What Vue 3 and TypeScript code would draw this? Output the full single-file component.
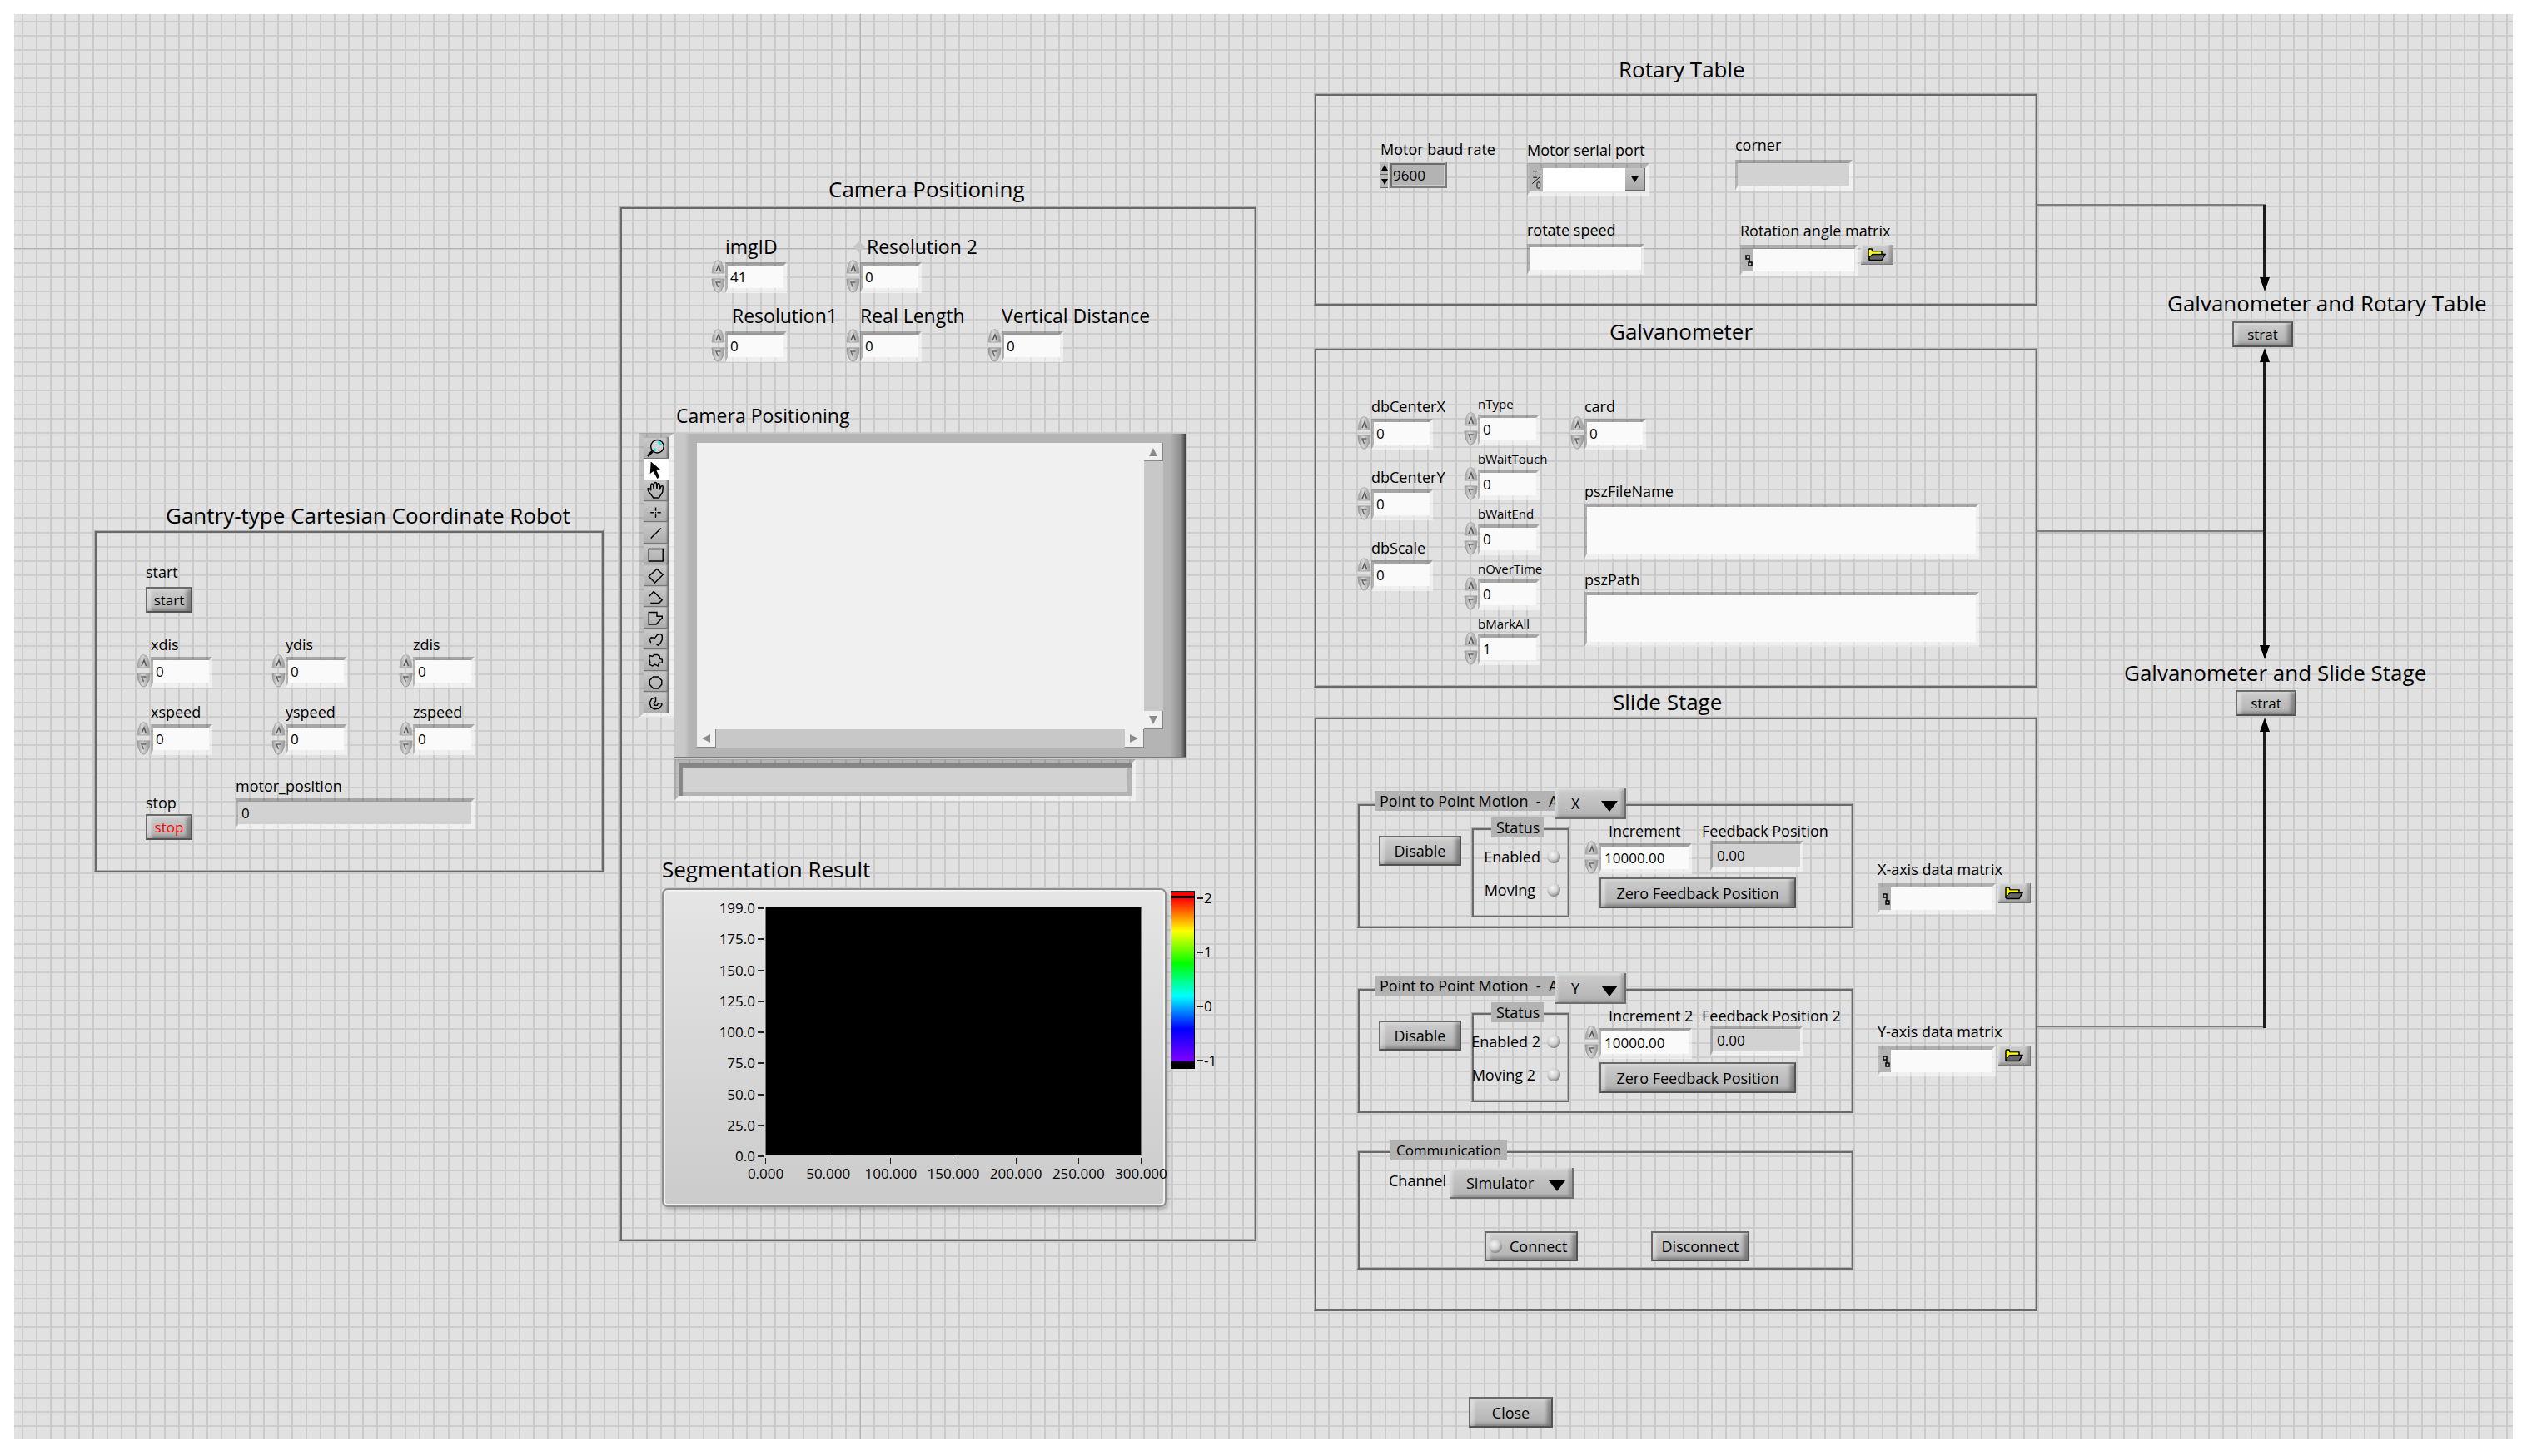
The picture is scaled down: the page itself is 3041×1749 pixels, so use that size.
<script setup lang="ts">
interface NumericField {
  id: string
  label: string
  value: string
}

const robotFields: NumericField[] = [
  { id: 'xdis', label: 'xdis', value: '0' },
  { id: 'ydis', label: 'ydis', value: '0' },
  { id: 'zdis', label: 'zdis', value: '0' },
  { id: 'xspeed', label: 'xspeed', value: '0' },
  { id: 'yspeed', label: 'yspeed', value: '0' },
  { id: 'zspeed', label: 'zspeed', value: '0' },
]

const cameraRows: NumericField[][] = [
  [
    { id: 'imgid', label: 'imgID', value: '41' },
    { id: 'res2', label: 'Resolution 2', value: '0' },
  ],
  [
    { id: 'res1', label: 'Resolution1', value: '0' },
    { id: 'length', label: 'Real Length', value: '0' },
    { id: 'vdist', label: 'Vertical Distance', value: '0' },
  ],
]

const centerFields: NumericField[] = [
  { id: 'dbcx', label: 'dbCenterX', value: '0' },
  { id: 'dbcy', label: 'dbCenterY', value: '0' },
  { id: 'dbscale', label: 'dbScale', value: '0' },
]

const markFields: NumericField[] = [
  { id: 'ntype', label: 'nType', value: '0' },
  { id: 'bwt', label: 'bWaitTouch', value: '0' },
  { id: 'bwe', label: 'bWaitEnd', value: '0' },
  { id: 'not', label: 'nOverTime', value: '0' },
  { id: 'bma', label: 'bMarkAll', value: '1' },
]

const axes = [
  { id: 'x', name: 'X', suffix: '' },
  { id: 'y', name: 'Y', suffix: ' 2' },
]

const tools: { name: string; path: string }[] = [
  { name: 'Zoom', path: '' },
  { name: 'Select', path: '' },
  { name: 'Pan', path: 'M10 19 L6 14 L5 11 Q6 9 8 11 L9 13 L9 6 Q10 3 12 6 L12.500 11 L13 4 Q15 2 16 4 L16.500 11 L17 5 Q19 3 20 6 L20 12 L21.500 8 Q24 6 24 9 L23.500 15 L19 22 L12 22 Z' },
  { name: 'Point', path: 'M8.500 13.500 H13 M17 13.500 H21.500 M15 7 V11.500 M15 15.500 V20 M14.500 13.500 H15.500' },
  { name: 'Line', path: 'M9 19.500 L21.500 7' },
  { name: 'Rectangle', path: 'M6.500 6 H24 V21 H6.500 Z' },
  { name: 'Rotated rectangle', path: 'M16.500 5 L24 12 L14 22 L6.500 14 Z' },
  { name: 'Broken line', path: 'M6.500 12.500 L12.500 6 L23 16.500 L19 20.500 H8.500' },
  { name: 'Polygon', path: 'M6.500 6 H16.500 V11 H23 V13 L15.500 21 H6.500 Z' },
  { name: 'Freehand line', path: 'M9 17 L7.500 13 L9.500 10.500 L14 11 L17 7 L21 6 L23 8 L23 13 L20.500 18 L18 20 L16 19' },
  { name: 'Freehand region', path: 'M7 11 L7.500 7 L11 8 L13 6 L17 6 L20 8 L20 11 L23 12 L23 16 L19 16 L18 20 L14 18 L11 20 L7 18 L8 15 Z' },
  { name: 'Oval', path: 'M12 6.500 H18 L22.500 11 V16 L18 21 H12 L7.500 16 V11 Z' },
  { name: 'Annulus', path: 'M15 6.500 L10 8 L7.500 13 L9 18 L13 21 L19 20 L22.500 16 L22.500 13.500 L18 13.500 L17 16 L14 16 L12.500 13.500 L15 11 Z' },
]

const yTicks = ['199.0', '175.0', '150.0', '125.0', '100.0', '75.0', '50.0', '25.0', '0.0']
const xTicks = ['0.000', '50.000', '100.000', '150.000', '200.000', '250.000', '300.000']
const rampTicks = ['2', '1', '0', '-1']
</script>

<template>
  <svg class="symbols" aria-hidden="true">
    <defs>
      <linearGradient id="metal" x1="0" x2="1" y1="0" y2="0">
        <stop offset="0" stop-color="#9a9a9a" />
        <stop offset="0.4" stop-color="#d8d8d8" />
        <stop offset="1" stop-color="#969696" />
      </linearGradient>
      <radialGradient id="lamp" cx="0.4" cy="0.35" r="0.65">
        <stop offset="0" stop-color="#f6f6f6" />
        <stop offset="0.6" stop-color="#cfcfcf" />
        <stop offset="1" stop-color="#858585" />
      </radialGradient>
    </defs>
    <symbol id="spin" viewBox="0 0 17 40">
      <path d="M1 16 L2 9 L5 2 Q8.500 -1 12 2 L15 9 L16 16 Z" fill="url(#metal)" stroke="#aaa" />
      <path d="M1 23 L2 31 L5 37 Q8.500 41 12 37 L15 31 L16 23 Z" fill="url(#metal)" stroke="#999" />
      <path d="M6 14 L9 7 L11.500 14" fill="none" stroke="#555" stroke-width="1.500" />
      <path d="M11.500 27 H6 L8.500 33" fill="none" stroke="#666" stroke-width="1.500" />
    </symbol>
    <symbol id="folder" viewBox="0 0 22 16">
      <path d="M1 14 V2 L2 1 H5 L6 4 H17 V7" fill="#ff0" stroke="#000" stroke-width="1.500" />
      <path d="M2 14.500 V11 L6 7.500 H21 L17 14.500 Z" fill="#666" stroke="#000" stroke-width="1.500" />
      <path d="M3 3 V10 M3 5.500 H16" stroke="#ff0" stroke-width="2" fill="none" />
    </symbol>
    <symbol id="path-mark" viewBox="0 0 10 16">
      <path d="M2 2 H6 V6 H2 Z M6 4 V10 M5 10 H9 V14 H5 Z" fill="none" stroke="#000" stroke-width="1.500" />
    </symbol>
  </svg>

  <main class="canvas">
    <section class="robot" aria-labelledby="t-robot">
      <h2 id="t-robot" class="title">Gantry-type Cartesian Coordinate Robot</h2>
      <div class="frame">
        <div class="stack start">
          <label class="label" for="start">start</label>
          <button id="start" class="btn small">start</button>
        </div>
        <div class="axes">
          <div v-for="f in robotFields" :key="f.id" class="stack">
            <label class="label indent" :for="f.id">{{ f.label }}</label>
            <div class="numeric">
              <svg class="spin"><use href="#spin" /></svg>
              <input :id="f.id" class="field" type="text" :value="f.value" />
            </div>
          </div>
        </div>
        <div class="robot-foot">
          <div class="stack stop">
            <label class="label" for="stop">stop</label>
            <button id="stop" class="btn small danger">stop</button>
          </div>
          <div class="stack position">
            <label class="label" for="mpos">motor_position</label>
            <input id="mpos" class="field readout" type="text" value="0" readonly />
          </div>
        </div>
      </div>
    </section>

    <section class="camera" aria-labelledby="t-camera">
      <h2 id="t-camera" class="title">Camera Positioning</h2>
      <div class="frame">
        <div v-for="(row, i) in cameraRows" :key="i" class="camera-row">
          <div v-for="f in row" :key="f.id" class="stack">
            <label class="label medium" :class="f.id" :for="f.id">
              <span v-if="f.id === 'res2'" class="origin"></span>{{ f.label }}
            </label>
            <div class="numeric">
              <svg class="spin"><use href="#spin" /></svg>
              <input :id="f.id" class="field" type="text" :value="f.value" />
            </div>
          </div>
        </div>

        <h3 class="medium viewer-title">Camera Positioning</h3>
        <div class="viewer">
          <div class="toolbar">
            <button v-for="(t, i) in tools" :key="t.name" class="tool" :class="{ active: i === 1 }" :aria-label="t.name">
              <svg viewBox="0 0 31 25">
                <template v-if="i === 0">
                  <circle cx="17" cy="11" r="8" fill="#d4d4d4" stroke="#000" stroke-width="1.500" />
                  <path d="M18 5 L22 9 M13 14 L15 16" stroke="#0ee" stroke-width="2.500" />
                  <path d="M11 17 L5 23" stroke="#000" stroke-width="3" />
                </template>
                <path v-else-if="i === 1" d="M9 3 L8 18 L12 15 L17 24 L20 22 L16 14 L21 13 Z" fill="#000" />
                <path v-else :d="t.path" fill="none" stroke="#000" stroke-width="1.500" />
              </svg>
            </button>
          </div>
          <div class="display">
            <div class="image-frame">
              <div class="image-area"></div>
              <div class="scroll vertical">
                <button aria-label="Scroll up"><svg viewBox="0 0 10 10"><path d="M5 0 L10 10 H0 Z" /></svg></button>
                <button aria-label="Scroll down"><svg viewBox="0 0 10 10"><path d="M0 0 H10 L5 10 Z" /></svg></button>
              </div>
              <div class="scroll horizontal">
                <button aria-label="Scroll left"><svg viewBox="0 0 10 10"><path d="M0 5 L10 0 V10 Z" /></svg></button>
                <button aria-label="Scroll right"><svg viewBox="0 0 10 10"><path d="M0 0 L10 5 L0 10 Z" /></svg></button>
              </div>
            </div>
            <div class="info-bar"></div>
          </div>
        </div>

        <h2 class="title result-title">Segmentation Result</h2>
        <div class="result">
          <div class="graph">
            <div class="y-axis">
              <span v-for="t in yTicks" :key="t">{{ t }}</span>
            </div>
            <div class="plot-column">
              <div class="plot"></div>
              <div class="x-axis">
                <span v-for="t in xTicks" :key="t">{{ t }}</span>
              </div>
            </div>
          </div>
          <div class="ramp">
            <div class="ramp-high"></div>
            <div class="ramp-scale"></div>
          </div>
          <div class="ramp-ticks">
            <span v-for="t in rampTicks" :key="t">{{ t }}</span>
          </div>
        </div>
      </div>
    </section>

    <div class="stations">
      <section class="rotary" aria-labelledby="t-rotary">
        <h2 id="t-rotary" class="title">Rotary Table</h2>
        <div class="frame">
          <div class="rotary-a">
            <label class="label" for="baud">Motor baud rate</label>
            <div class="classic">
              <div class="classic-spin">
                <button aria-label="Increase"><svg viewBox="0 0 8 8"><path d="M4 0 L8 7 H0 Z" /></svg></button>
                <button aria-label="Decrease"><svg viewBox="0 0 8 8"><path d="M0 1 H8 L4 8 Z" /></svg></button>
              </div>
              <input id="baud" type="text" value="9600" />
            </div>
          </div>
          <div class="rotary-b">
            <label class="label" for="port">Motor serial port</label>
            <div class="port">
              <svg class="io" viewBox="0 0 16 30">
                <path d="M4 4 H9 M6.500 4 V12 M4 12 H9 M3 20 L13 11" />
                <rect x="9" y="18" width="4" height="8" rx="2" />
              </svg>
              <select id="port"><option></option></select>
              <span class="drop"><svg viewBox="0 0 10 8"><path d="M0 0 H10 L5 8 Z" /></svg></span>
            </div>
            <label class="label speed-label" for="speed">rotate speed</label>
            <input id="speed" class="field speed" type="text" />
          </div>
          <div class="rotary-c">
            <label class="label" for="corner">corner</label>
            <input id="corner" class="field readout corner" type="text" readonly />
            <div class="matrix angle">
              <label class="label" for="angle">Rotation angle matrix</label>
              <div class="matrix-row">
                <div class="path-field">
                  <svg><use href="#path-mark" /></svg>
                  <input id="angle" type="text" />
                </div>
                <button class="browse" aria-label="Browse"><svg><use href="#folder" /></svg></button>
              </div>
            </div>
          </div>
        </div>
      </section>

      <section class="galvo" aria-labelledby="t-galvo">
        <h2 id="t-galvo" class="title">Galvanometer</h2>
        <div class="frame">
          <div class="galvo-a">
            <div v-for="f in centerFields" :key="f.id" class="stack">
              <label class="label indent" :for="f.id">{{ f.label }}</label>
              <div class="numeric">
                <svg class="spin"><use href="#spin" /></svg>
                <input :id="f.id" class="field" type="text" :value="f.value" />
              </div>
            </div>
          </div>
          <div class="galvo-b">
            <div v-for="f in markFields" :key="f.id" class="stack">
              <label class="label tiny indent" :for="f.id">{{ f.label }}</label>
              <div class="numeric">
                <svg class="spin"><use href="#spin" /></svg>
                <input :id="f.id" class="field" type="text" :value="f.value" />
              </div>
            </div>
          </div>
          <div class="galvo-c">
            <div class="stack">
              <label class="label indent" for="card">card</label>
              <div class="numeric">
                <svg class="spin"><use href="#spin" /></svg>
                <input id="card" class="field" type="text" value="0" />
              </div>
            </div>
            <div class="text-block file">
              <label class="label" for="pszfile">pszFileName</label>
              <textarea id="pszfile" class="field area"></textarea>
            </div>
            <div class="text-block">
              <label class="label" for="pszpath">pszPath</label>
              <textarea id="pszpath" class="field area"></textarea>
            </div>
          </div>
        </div>
      </section>

      <section class="slide" aria-labelledby="t-slide">
        <h2 id="t-slide" class="title">Slide Stage</h2>
        <div class="frame">
          <div class="slide-left">
            <div v-for="a in axes" :key="a.id" class="frame motion">
              <div class="motion-head">
                <label class="legend motion-legend" :for="'axis-' + a.id">Point to Point Motion&nbsp; -&nbsp; A</label>
                <div class="picker">
                  <select :id="'axis-' + a.id"><option>{{ a.name }}</option></select>
                  <svg viewBox="0 0 20 13"><path d="M0 0 H20 L10 13 Z" /></svg>
                </div>
              </div>
              <div class="motion-body">
                <button class="btn disable">Disable</button>
                <div class="frame status">
                  <span class="legend status-legend">Status</span>
                  <div class="lamp-row">
                    <span>Enabled{{ a.suffix }}</span>
                    <svg viewBox="0 0 18 18"><circle cx="8" cy="9" r="8" fill="url(#lamp)" /></svg>
                  </div>
                  <div class="lamp-row moving">
                    <span>Moving{{ a.suffix }}</span>
                    <svg viewBox="0 0 18 18"><circle cx="8" cy="9" r="8" fill="url(#lamp)" /></svg>
                  </div>
                </div>
                <div class="motion-values">
                  <div class="motion-pair">
                    <div class="stack increment">
                      <label class="label" :for="'inc-' + a.id">Increment{{ a.suffix }}</label>
                      <div class="numeric">
                        <svg class="spin"><use href="#spin" /></svg>
                        <input :id="'inc-' + a.id" class="field" type="text" value="10000.00" />
                      </div>
                    </div>
                    <div class="stack feedback">
                      <label class="label" :for="'fb-' + a.id">Feedback Position{{ a.suffix }}</label>
                      <input :id="'fb-' + a.id" class="field readout" type="text" value="0.00" readonly />
                    </div>
                  </div>
                  <button class="btn zero">Zero Feedback Position</button>
                </div>
              </div>
            </div>

            <div class="frame comm">
              <span class="legend comm-legend">Communication</span>
              <div class="comm-row">
                <label class="label" for="channel">Channel</label>
                <div class="picker channel">
                  <select id="channel"><option>Simulator</option></select>
                  <svg viewBox="0 0 20 13"><path d="M0 0 H20 L10 13 Z" /></svg>
                </div>
              </div>
              <div class="comm-buttons">
                <button class="btn connect">
                  <svg viewBox="0 0 18 18"><circle cx="8" cy="9" r="8" fill="url(#lamp)" /></svg>Connect
                </button>
                <button class="btn disconnect">Disconnect</button>
              </div>
            </div>
          </div>

          <div class="slide-right">
            <div v-for="a in axes" :key="a.id" class="matrix">
              <label class="label" :for="'matrix-' + a.id">{{ a.name }}-axis data matrix</label>
              <div class="matrix-row">
                <div class="path-field">
                  <svg><use href="#path-mark" /></svg>
                  <input :id="'matrix-' + a.id" type="text" />
                </div>
                <button class="browse" aria-label="Browse"><svg><use href="#folder" /></svg></button>
              </div>
            </div>
          </div>
        </div>
      </section>

      <button class="btn close">Close</button>
    </div>

    <div class="links">
      <svg class="wire" width="280" height="105" viewBox="0 0 280 105">
        <path class="wire-light" d="M0 3 H274" />
        <path class="wire-line" d="M0 1 H274" />
        <path class="wire-bold" d="M273 1 V92" />
        <path d="M267 88 H279 L273 105 Z" />
      </svg>
      <label class="title link-rotary" for="run-rotary">Galvanometer and Rotary Table</label>
      <button id="run-rotary" class="btn small run">strat</button>
      <svg class="wire between" width="280" height="374" viewBox="0 0 280 374">
        <path class="wire-light" d="M0 222 H273" />
        <path class="wire-line" d="M0 220 H273" />
        <path class="wire-bold" d="M273 14 V360" />
        <path d="M267 17 H279 L273 0 Z M267 357 H279 L273 374 Z" />
      </svg>
      <label class="title link-slide" for="run-slide">Galvanometer and Slide Stage</label>
      <button id="run-slide" class="btn small run slide-run">strat</button>
      <svg class="wire last" width="280" height="375" viewBox="0 0 280 375">
        <path class="wire-light" d="M0 373 H274" />
        <path class="wire-line" d="M0 371 H274" />
        <path class="wire-bold" d="M273 14 V373" />
        <path d="M267 17 H279 L273 0 Z" />
      </svg>
    </div>
  </main>
</template>

<style>
body {
  background: #fff;
}
#app {
  display: flow-root;
}
</style>

<style scoped>
.symbols {
  position: absolute;
  width: 0;
  height: 0;
}
.canvas,
.canvas * {
  box-sizing: border-box;
}
.canvas {
  margin: 17px 23px 21px 17px;
  padding: 0 0 13px 96px;
  display: grid;
  grid-template-columns: 612fr 19fr 765fr 69fr 869fr 571fr;
  align-items: start;
  font-family: "Open Sans", "Noto Sans", sans-serif;
  font-size: 18px;
  line-height: 24px;
  color: #000;
  background-color: #e1e1e1;
  background-image:
    linear-gradient(#b2b2b2, #b2b2b2),
    linear-gradient(#b2b2b2, #b2b2b2),
    repeating-linear-gradient(to right, transparent 0 9px, #cacaca 9px 11px, transparent 11px calc(100% / 176)),
    repeating-linear-gradient(to bottom, transparent 0 8px, #cdcdcd 8px 10px, transparent 10px calc(100% / 100.4));
  background-size: 1px 100%, 100% 1px, auto, auto;
  background-position: 1016px 0, 0 281px, 0 0, 0 0;
  background-repeat: no-repeat, no-repeat, repeat, repeat;
}
.robot {
  grid-column: 1;
  padding-top: 585px;
}
.camera {
  grid-column: 3;
  padding-top: 193px;
}
.stations {
  grid-column: 5;
  padding-top: 49px;
}
.links {
  grid-column: 6;
  padding-top: 228px;
}

input,
select,
textarea,
button {
  font-family: inherit;
  font-size: 17px;
  line-height: 24px;
  color: #000;
  margin: 0;
  padding: 0;
  border: 0;
  border-radius: 0;
  outline: 0;
}
h2,
h3 {
  margin: 0;
  font-weight: 400;
}
.title {
  display: block;
  font-size: 26px;
  line-height: 35px;
  white-space: nowrap;
}
.label {
  display: block;
  white-space: nowrap;
}
.indent {
  padding-left: 17px;
}
.medium {
  font-size: 23px;
  line-height: 31px;
}
.tiny {
  font-size: 15px;
  line-height: 20px;
}
.frame {
  border: 1px solid #b0b0b0;
  border-right: 2px solid #696969;
  border-bottom: 2px solid #696969;
  box-shadow: inset 2px 2px #696969, inset -1px -1px #b0b0b0;
}
.stack {
  display: flex;
  flex-direction: column;
  align-items: flex-start;
}
.numeric {
  display: flex;
  align-items: flex-end;
}
.spin {
  width: 17px;
  height: 40px;
  flex: none;
}
.field {
  width: 74px;
  height: 37px;
  background: #fafafa;
  background-clip: padding-box;
  border-style: solid;
  border-width: 4px 4px 6px 3px;
  border-color: rgba(0, 0, 0, 0.26) rgba(255, 255, 255, 0.5) rgba(255, 255, 255, 0.5) rgba(0, 0, 0, 0.2);
  padding: 0 3px;
  display: block;
  resize: none;
}
.field.readout {
  background-color: #d2d2d2;
  padding-left: 4px;
}
.btn {
  height: 36px;
  font-size: 18px;
  border: 2px solid #6a6a6a;
  border-right-color: #525252;
  border-bottom-color: #525252;
  background: linear-gradient(#cdcdcd, #b0b0b0);
  box-shadow: inset 5px 2px 3px rgba(255, 255, 255, 0.35), inset -5px -2px 4px rgba(0, 0, 0, 0.32);
  white-space: nowrap;
  text-align: center;
}
.btn.small {
  width: 56px;
  height: 31px;
  font-size: 17px;
}
.btn.danger {
  color: #f00;
}
.legend {
  background: #b3b3b3;
  padding: 0 6px;
  height: 24px;
  white-space: nowrap;
}

/* Gantry robot */
.robot .title {
  padding-left: 86px;
}
.robot .frame {
  padding: 37px 0 37px;
}
.start {
  padding-left: 61px;
  gap: 6px;
}
.axes {
  display: grid;
  grid-template-columns: 162px 153px auto;
  justify-content: start;
  row-gap: 17px;
  padding: 26px 0 0 50px;
}
.robot-foot {
  display: flex;
  padding: 25px 153px 0 61px;
  gap: 52px;
}
.stop {
  padding-top: 20px;
  gap: 2px;
}
.position {
  flex: 1;
  gap: 3px;
}
.position .field {
  width: 100%;
}

/* Camera */
.camera .title {
  padding-left: 251px;
  margin-bottom: 3px;
}
.camera .frame {
  padding: 32px 0 39px;
}
.camera-row {
  display: grid;
  grid-template-columns: 162px 170px auto;
  justify-content: start;
  padding-left: 109px;
  margin-bottom: 12px;
}
.camera-row .label {
  padding-left: 17px;
  display: flex;
  align-items: center;
}
.camera-row .res1 {
  padding-left: 25px;
}
.camera-row .res2 {
  padding-left: 9px;
}
.origin {
  width: 14px;
  height: 14px;
  margin-right: 2px;
  background: #c6c6c6;
  clip-path: polygon(50% 0, 100% 50%, 50% 100%, 0 50%);
}
.viewer-title {
  padding: 37px 0 5px 67px;
}
.viewer {
  display: flex;
  align-items: flex-start;
  padding: 0 83px 0 22px;
}
.toolbar {
  width: 43px;
  height: 342px;
  flex: none;
  display: grid;
  grid-auto-rows: 1fr;
  border-style: solid;
  border-width: 5px 7px 5px 6px;
  border-color: rgba(0, 0, 0, 0.18) rgba(255, 255, 255, 0.5) rgba(255, 255, 255, 0.5) rgba(0, 0, 0, 0.14);
}
.tool {
  display: block;
  background: linear-gradient(#cacaca, #adadad);
  box-shadow: inset 0 -1px #777, inset -2px 0 2px rgba(0, 0, 0, 0.4);
  min-height: 0;
  overflow: hidden;
}
.tool.active {
  background: #fff;
  box-shadow: none;
}
.tool svg {
  display: block;
  width: 100%;
  height: 100%;
}
.display {
  flex: 1;
  min-width: 0;
}
.image-frame {
  display: grid;
  grid-template: 344px 22px / 1fr 23px;
  padding: 11px 27px 11px;
  border-top: 1px solid #c6c6c6;
  border-bottom: 2px solid #7a7a7a;
  background:
    linear-gradient(to right, #c8c8c8 0 70%, #b4b4b4) left / 18px 100% no-repeat,
    linear-gradient(to right, #b4b4b4, #8c8c8c 70%, #5a5a5a 90%, #3c3c3c) right / 19px 100% no-repeat,
    #b4b4b4;
}
.image-area {
  background: #f0f0f0;
}
.scroll {
  display: flex;
  justify-content: space-between;
  background: #c8c8c8;
}
.scroll.vertical {
  flex-direction: column;
}
.scroll button {
  width: 23px;
  height: 22px;
  background: #f0f0f0;
  border-right: 1px solid #888;
  border-bottom: 1px solid #888;
  display: grid;
  place-items: center;
}
.scroll svg {
  width: 10px;
  height: 10px;
  fill: #8c8c8c;
}
.info-bar {
  height: 50px;
  margin: 1px 60px 0 0;
  border-style: solid;
  border-width: 5px 5px 6px 5px;
  border-color: rgba(0, 0, 0, 0.2) rgba(255, 255, 255, 0.5) rgba(255, 255, 255, 0.5) rgba(0, 0, 0, 0.16);
  background: #d2d2d2;
  background-clip: padding-box;
  box-shadow: inset 5px 5px 1px #858585, inset -5px -5px #b4b4b4;
}
.camera .result-title {
  padding: 65px 0 0 50px;
  margin-bottom: 5px;
}
.result {
  display: flex;
  align-items: flex-start;
  padding: 0 31px 0 50px;
}
.graph {
  flex: 1;
  height: 383px;
  display: grid;
  grid-template-columns: 122px 1fr 28px;
  padding-top: 10px;
  font-size: 17px;
  border: 2px solid #8e8e8e;
  border-radius: 7px;
  background: linear-gradient(#e5e5e5, #cbcbcb);
  box-shadow: inset 0 0 0 2px #f2f2f2, 2px 4px 4px rgba(0, 0, 0, 0.2);
}
.y-axis {
  height: 322px;
  display: flex;
  flex-direction: column;
  justify-content: space-between;
  align-items: stretch;
}
.y-axis span {
  display: flex;
  justify-content: flex-end;
  align-items: center;
  gap: 3px;
  padding-right: 2px;
}
.y-axis span::after {
  content: "";
  width: 7px;
  height: 2px;
  background: #222;
}
.plot-column {
  padding-top: 10px;
}
.plot {
  height: 299px;
  background: #000;
  border: 1px solid #777;
}
.x-axis {
  display: grid;
  grid-template-columns: repeat(7, 1fr);
  margin: 3px -37px 0;
}
.x-axis span {
  display: flex;
  flex-direction: column;
  align-items: center;
}
.x-axis span::before {
  content: "";
  width: 1px;
  height: 7px;
  background: #222;
}
.ramp {
  width: 29px;
  height: 214px;
  margin: 3px 0 0 5px;
  flex: none;
  border: 1px solid #000;
  border-top: 2px solid #222;
  border-bottom: 9px solid #000;
}
.ramp-high {
  height: 7px;
  background: #f00;
  border-bottom: 3px solid #000;
}
.ramp-scale {
  height: 196px;
  background: linear-gradient(#f00, #ff0 20%, #0f0 40%, #0ff 60%, #00f 80%, #8000ff);
}
.ramp-ticks {
  height: 219px;
  width: 41px;
  flex: none;
  padding-left: 3px;
  display: flex;
  flex-direction: column;
  justify-content: space-between;
  font-size: 17px;
}
.ramp-ticks span {
  display: flex;
  align-items: center;
  gap: 1px;
}
.ramp-ticks span::before {
  content: "";
  width: 7px;
  height: 2px;
  background: #222;
}

/* Rotary table */
.rotary .title {
  padding: 0 0 11px 366px;
}
.rotary .frame {
  display: flex;
  padding: 49px 0 34px 79px;
}
.rotary-a {
  width: 176px;
  padding-top: 5px;
}
.classic {
  display: flex;
  gap: 1px;
  width: 80px;
  height: 32px;
  margin-top: 3px;
}
.classic-spin {
  width: 9px;
  display: grid;
  grid-template-rows: 1fr 1fr;
}
.classic-spin button {
  background: #b9b9b9;
  border-bottom: 1px solid #666;
  display: grid;
  place-items: center;
}
.classic-spin svg {
  width: 8px;
  height: 8px;
}
.classic input {
  width: 70px;
  height: 32px;
  background: #b3b3b3;
  border: 2px solid #c6c6c6;
  border-right-color: #7d7d7d;
  border-bottom-color: #7d7d7d;
  box-shadow: inset 2px 2px #6b6b6b, inset -2px -2px #cfcfcf;
  padding-left: 3px;
}
.rotary-b {
  width: 250px;
  padding-top: 6px;
}
.port {
  width: 147px;
  height: 40px;
  margin-top: 4px;
  display: flex;
  background: #b4b4b4;
  background-clip: padding-box;
  border-style: solid;
  border-width: 6px 5px 6px 3px;
  border-color: rgba(0, 0, 0, 0.2) rgba(255, 255, 255, 0.5) rgba(255, 255, 255, 0.5) rgba(0, 0, 0, 0.16);
}
.io {
  width: 16px;
  height: 28px;
  flex: none;
  fill: none;
  stroke: #000;
}
.port select {
  flex: 1;
  min-width: 0;
  background: #fff;
  appearance: none;
}
.drop {
  width: 24px;
  display: grid;
  place-items: center;
  background: linear-gradient(#c6c6c6, #a8a8a8);
  border-right: 2px solid #666;
  border-bottom: 2px solid #666;
}
.drop svg {
  width: 11px;
  height: 8px;
}
.speed-label {
  margin: 28px 0 5px;
}
.field.speed {
  width: 141px;
}
.field.corner {
  width: 141px;
  margin-top: 6px;
}
.angle {
  padding: 36px 0 0 6px;
}
.matrix-row {
  display: flex;
  gap: 3px;
  margin-top: 5px;
}
.path-field {
  display: flex;
  width: 142px;
  height: 37px;
  background: #b4b4b4;
  background-clip: padding-box;
  border-style: solid;
  border-width: 5px 5px 5px 3px;
  border-color: rgba(0, 0, 0, 0.22) rgba(255, 255, 255, 0.5) rgba(255, 255, 255, 0.5) rgba(0, 0, 0, 0.16);
}
.path-field svg {
  width: 10px;
  height: 16px;
  margin: 6px 1px 0 2px;
  flex: none;
}
.path-field input {
  flex: 1;
  min-width: 0;
  background: #fafafa;
}
.browse {
  width: 39px;
  height: 24px;
  display: grid;
  place-items: center;
  background: linear-gradient(#cdcdcd, #b0b0b0);
  border-right: 1px solid #777;
  border-bottom: 1px solid #777;
  box-shadow: inset -4px -2px 3px rgba(0, 0, 0, 0.2), inset 2px 1px 2px rgba(255, 255, 255, 0.4);
}
.browse svg {
  width: 22px;
  height: 16px;
}

/* Galvanometer */
.galvo .title {
  padding: 14px 0 2px 355px;
}
.galvo .frame {
  display: flex;
  padding: 56px 68px 25px 51px;
}
.galvo-a {
  width: 128px;
  display: flex;
  flex-direction: column;
  gap: 21px;
  padding-top: 1px;
}
.galvo-b {
  width: 128px;
  display: flex;
  flex-direction: column;
  gap: 6px;
}
.galvo-c {
  flex: 1;
  padding-top: 1px;
}
.text-block {
  padding: 13px 0 0 17px;
}
.text-block.file {
  padding-top: 38px;
}
.field.area {
  width: 100%;
  height: 66px;
  margin-top: 3px;
}

/* Slide stage */
.slide .title {
  padding: 0 0 0 359px;
}
.slide > .frame {
  display: flex;
  gap: 29px;
  padding: 103px 0 48px 51px;
}
.slide-left {
  width: 596px;
  flex: none;
}
.motion {
  height: 150px;
  margin-bottom: 72px;
}
.motion-head {
  display: flex;
  align-items: flex-start;
  height: 27px;
  margin-top: -19px;
  padding-left: 20px;
}
.motion-legend {
  width: 216px;
  margin-top: 3px;
}
.picker {
  position: relative;
  width: 86px;
  height: 37px;
}
.picker select {
  display: block;
  width: 100%;
  height: 37px;
  padding: 0 20px;
  font-size: 18px;
  appearance: none;
  background: linear-gradient(#cdcdcd, #b2b2b2);
  border-right: 2px solid #6d6d6d;
  border-bottom: 2px solid #6d6d6d;
  box-shadow: inset 4px 2px 3px rgba(255, 255, 255, 0.35), inset -4px -2px 3px rgba(0, 0, 0, 0.18);
}
.picker svg {
  position: absolute;
  right: 10px;
  top: 15px;
  width: 20px;
  height: 13px;
  pointer-events: none;
}
.motion-body {
  display: flex;
  align-items: flex-start;
  padding-left: 25px;
}
.disable {
  width: 99px;
  margin: 30px 12px 0 0;
}
.status {
  width: 118px;
  height: 108px;
  margin: 20px 18px 0 0;
}
.status-legend {
  display: block;
  width: 63px;
  margin: -13px 0 0 23px;
  text-align: center;
}
.lamp-row {
  display: flex;
  justify-content: flex-end;
  align-items: center;
  gap: 8px;
  padding: 11px 7px 0 0;
  margin-left: -12px;
  white-space: nowrap;
}
.lamp-row svg,
.connect svg {
  width: 18px;
  height: 18px;
  flex: none;
}
.lamp-row.moving {
  padding-top: 16px;
  gap: 14px;
}
.motion-values {
  padding-top: 12px;
}
.motion-pair {
  display: flex;
  gap: 12px;
}
.increment {
  width: 129px;
}
.increment .label {
  padding-left: 29px;
}
.increment .field {
  width: 112px;
  padding-left: 4px;
}
.feedback .field {
  width: 112px;
  margin-left: 10px;
  padding-left: 5px;
}
.zero {
  width: 236px;
  height: 37px;
  margin: 4px 0 0 18px;
}
.comm {
  height: 143px;
  margin-top: -27px;
}
.comm-legend {
  display: block;
  width: 140px;
  margin: -13px 0 0 39px;
  text-align: center;
  font-size: 17px;
}
.comm-row {
  display: flex;
  align-items: flex-start;
  padding: 9px 0 0 37px;
}
.comm-row .label {
  width: 73px;
  padding-top: 3px;
}
.picker.channel {
  width: 149px;
}
.comm-buttons {
  display: flex;
  padding: 39px 0 0 152px;
  gap: 88px;
}
.connect {
  width: 112px;
  display: flex;
  align-items: center;
  gap: 7px;
  padding-left: 3px;
}
.disconnect {
  width: 118px;
}
.slide-right {
  display: flex;
  flex-direction: column;
  gap: 129px;
  padding-top: 67px;
}
.btn.close {
  display: block;
  width: 101px;
  height: 37px;
  margin: 103px 0 0 186px;
}

/* Wiring between stations */
.links {
  display: flex;
  flex-direction: column;
  align-items: flex-start;
}
.wire {
  display: block;
  margin-bottom: -3px;
}
.wire.between {
  margin-top: 1px;
}
.wire.last {
  margin: 2px 0 0;
}
.wire-line {
  stroke: #7d7d7d;
  stroke-width: 2;
}
.wire-light {
  stroke: #c0c0c0;
  stroke-width: 2;
}
.wire-bold {
  stroke: #1c1c1c;
  stroke-width: 4;
}
.link-rotary {
  padding-left: 156px;
}
.link-slide {
  padding-left: 104px;
  margin-top: 2px;
}
.btn.run {
  width: 73px;
  margin: 4px 0 0 234px;
}
.btn.slide-run {
  margin: 3px 0 0 238px;
}
</style>
